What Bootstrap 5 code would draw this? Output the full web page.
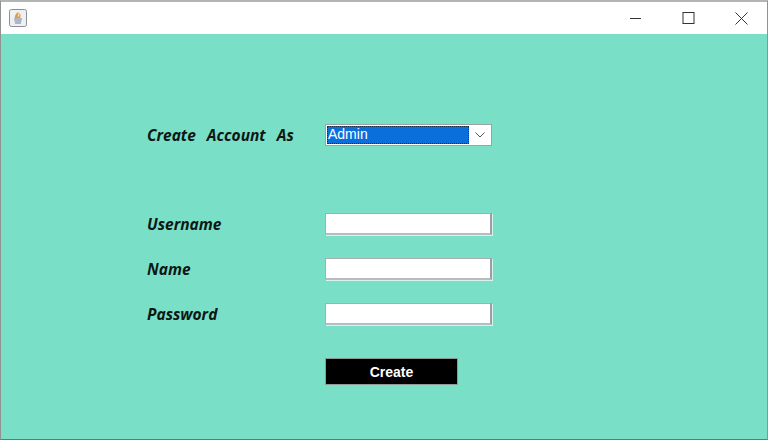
<!DOCTYPE html>
<html lang="en">
<head>
<meta charset="utf-8">
<title>Create Account</title>
<link href="https://cdn.jsdelivr.net/npm/bootstrap@5.3.0/dist/css/bootstrap.min.css" rel="stylesheet">
<style>
html,body{height:440px;overflow:hidden;margin:0}
body{background:#7adfc7;font-family:"Liberation Sans",Arial,sans-serif}
.app-window{width:768px;height:440px;border:1px solid #8f9492;border-top:2px solid #b4b4b4;border-bottom-color:#6f7573;background:#7adfc7}
.title-bar{height:32px;background:#fff;padding-left:8px}
.app-icon{width:18px;height:18px;display:block}
.win-btn{width:53px;height:32px;display:flex;align-items:center;justify-content:center}
.win-btns{margin-right:-1px}
.form-area{padding:90px 0 0 146px}
.form-row{height:22px;margin-bottom:23px}
.form-row.gap-large{margin-bottom:67px}
.form-row.last{margin-bottom:33px}
.lbl{width:178px;flex:none;margin:0;font-family:"Open Sans",sans-serif;font-style:italic;font-weight:700;font-size:15.500px;letter-spacing:0;word-spacing:7px;color:#0c1815;line-height:22px}
.combo{width:167px;height:22px;background:#fff;border:1px solid #9aa5a2;padding:1px;color:#fff;font-size:14px;line-height:17px}
.combo-val{flex:1 1 auto;background:#0a6fdb;outline:1px dotted #1c2a4a;outline-offset:-1px;padding-left:1px}
.combo-arrow{width:21px}
.field{width:167px;height:22px;background:#fff;border:0;border-top:1px solid #a6aeb0;border-left:1px solid #a6aeb0;border-right:2px solid #9a9ea4;border-bottom:2px solid #b6bcc2;box-shadow:1px 1px 0 #d6f3ec;border-radius:0;padding:0 2px;display:block}
.field:focus{outline:0}
.create-btn{width:133px;height:27px;background:#000;color:#fff;border:1px solid #8d9a97;border-radius:0;font-weight:700;font-size:14px;padding:2px 0 0;line-height:23px}
</style>
</head>
<body>
<div class="app-window d-flex flex-column">
  <div class="title-bar d-flex align-items-center justify-content-between">
    <svg class="app-icon" viewBox="0 0 18 18" aria-hidden="true">
      <rect x=".5" y=".5" width="17" height="17" rx="2" fill="#eef0f3" stroke="#8b8f96"/>
      <path d="M9 3c2 2-1 3 0 5 1-1 2-2 1-4 2 1 2 3 1 5H6c-1-2 1-4 3-6z" fill="#e39a45"/>
      <path d="M5 10h8M5.500 12h7M6 14h6" stroke="#6f7f96" stroke-width="1"/>
    </svg>
    <div class="win-btns d-flex">
      <div class="win-btn"><svg width="13" height="13" viewBox="0 0 13 13" aria-hidden="true"><path d="M1 6.500h11" stroke="#333" fill="none"/></svg></div>
      <div class="win-btn"><svg width="13" height="13" viewBox="0 0 13 13" aria-hidden="true"><rect x="1" y=".5" width="11" height="11" stroke="#333" fill="none"/></svg></div>
      <div class="win-btn"><svg width="13" height="13" viewBox="0 0 13 13" aria-hidden="true"><path d="M.5.500l12 12M12.500.500l-12 12" stroke="#333" fill="none"/></svg></div>
    </div>
  </div>
  <form class="form-area flex-grow-1">
    <div class="form-row gap-large d-flex align-items-center">
      <label class="lbl">Create Account As</label>
      <div class="combo d-flex">
        <div class="combo-val">Admin</div>
        <div class="combo-arrow d-flex align-items-center justify-content-center">
          <svg width="10" height="6" viewBox="0 0 10 6" aria-hidden="true"><path d="M.5.500l4.500 4.500 4.500-4.500" stroke="#555" fill="none"/></svg>
        </div>
      </div>
    </div>
    <div class="form-row d-flex align-items-center">
      <label class="lbl">Username</label>
      <input class="field" type="text" aria-label="Username">
    </div>
    <div class="form-row d-flex align-items-center">
      <label class="lbl">Name</label>
      <input class="field" type="text" aria-label="Name">
    </div>
    <div class="form-row last d-flex align-items-center">
      <label class="lbl">Password</label>
      <input class="field" type="password" aria-label="Password">
    </div>
    <div class="d-flex">
      <div class="lbl"></div>
      <button type="button" class="btn create-btn">Create</button>
    </div>
  </form>
</div>
<script src="https://cdn.jsdelivr.net/npm/bootstrap@5.3.0/dist/js/bootstrap.bundle.min.js"></script>
</body>
</html>
